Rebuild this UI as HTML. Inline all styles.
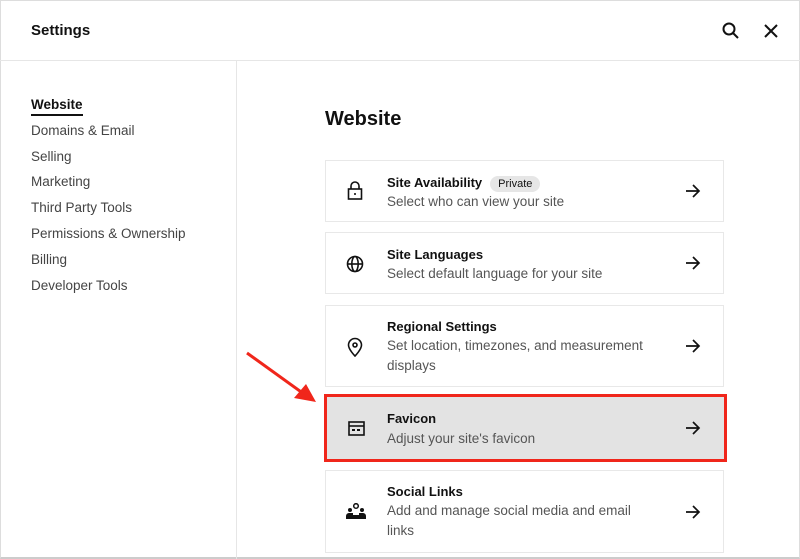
<!DOCTYPE html>
<html><head><style>
*{box-sizing:border-box;margin:0;padding:0}
body{width:800px;height:559px;overflow:hidden;background:#fff;font-family:"Liberation Sans",sans-serif;position:relative;color:#111}
.frame{position:absolute;left:0;top:0;width:800px;height:559px;border:1px solid #ddd;border-bottom:2px solid #ccc}
.hdr{position:absolute;left:0;top:0;width:800px;height:61px;border-bottom:1px solid #e6e6e6}
.hdr h1{position:absolute;left:31px;top:22px;font-size:15px;font-weight:bold}
.side{position:absolute;left:236px;top:61px;width:1px;height:498px;background:#e6e6e6}
.nav{position:absolute;left:31px;top:96px;font-size:13.5px;color:#444}
.nav div{height:25.8px;line-height:18px}
.nav .a{color:#111;font-weight:bold}
.nav .a span{border-bottom:2px solid #111;padding-bottom:2px}
h2{position:absolute;left:325px;top:108px;font-size:20px;font-weight:bold}
.card{position:absolute;left:325px;width:399px;border:1px solid #e8e8e8;background:#fff}
.card .t{position:absolute;left:61px;font-size:13px;font-weight:bold}
.card .d{position:absolute;left:61px;font-size:13.5px;color:#555;line-height:20px;width:265px}
.card svg.ic{position:absolute;left:20px}
.card .ar{position:absolute;right:22px;top:50%;margin-top:-8px}
.pill{display:inline-block;background:#e6e6e6;border-radius:9px;font-size:11px;font-weight:normal;padding:2px 8px;margin-left:8px}
.red{position:absolute;left:324px;top:394px;width:403px;height:68px;border:3px solid #f0261b}
</style></head><body>
<div class="frame"></div>
<div class="hdr"><h1>Settings</h1>
<svg style="position:absolute;left:722px;top:22px" width="17" height="17" viewBox="0 0 17 17" fill="none" stroke="#111" stroke-width="2"><circle cx="7" cy="7" r="5.5"/><path d="M11 11l5 5"/></svg>
<svg style="position:absolute;left:764px;top:24px" width="14" height="14" viewBox="0 0 14 14" stroke="#111" stroke-width="2"><path d="M1 1l12 12M13 1L1 13"/></svg>
</div>
<div class="side"></div>
<div class="nav">
<div class="a"><span>Website</span></div><div>Domains &amp; Email</div><div>Selling</div><div>Marketing</div><div>Third Party Tools</div><div>Permissions &amp; Ownership</div><div>Billing</div><div>Developer Tools</div>
</div>
<h2>Website</h2>

<div class="card" style="top:160px;height:62px">
<svg class="ic" style="top:20px;left:21px" width="16" height="19" viewBox="0 0 16 19" fill="none" stroke="#111" stroke-width="1.6"><rect x="1.5" y="8" width="13" height="10"/><path d="M4 8V5a4 4 0 0 1 8 0v3"/><path d="M8 12v2"/></svg>
<div class="t" style="top:14px">Site Availability<span class="pill">Private</span></div>
<div class="d" style="top:31px">Select who can view your site</div>
<svg class="ar" width="16" height="16" viewBox="0 0 16 16" fill="none" stroke="#111" stroke-width="1.7"><path d="M1 8h13M8 2l6 6-6 6"/></svg>
</div>

<div class="card" style="top:232px;height:62px">
<svg class="ic" style="top:22px" width="18" height="18" viewBox="0 0 18 18" fill="none" stroke="#111" stroke-width="1.6"><circle cx="9" cy="9" r="7.5"/><ellipse cx="9" cy="9" rx="3.2" ry="7.5"/><path d="M1.5 9h15"/></svg>
<div class="t" style="top:14px">Site Languages</div>
<div class="d" style="top:31px">Select default language for your site</div>
<svg class="ar" width="16" height="16" viewBox="0 0 16 16" fill="none" stroke="#111" stroke-width="1.7"><path d="M1 8h13M8 2l6 6-6 6"/></svg>
</div>

<div class="card" style="top:305px;height:82px">
<svg class="ic" style="top:31px;left:21px" width="16" height="20" viewBox="0 0 16 20" fill="none" stroke="#111" stroke-width="1.6"><path d="M8 19s6.5-6.5 6.5-11A6.5 6.5 0 0 0 1.5 8C1.5 12.5 8 19 8 19z"/><circle cx="8" cy="8" r="2"/></svg>
<div class="t" style="top:13px">Regional Settings</div>
<div class="d" style="top:30px">Set location, timezones, and measurement displays</div>
<svg class="ar" width="16" height="16" viewBox="0 0 16 16" fill="none" stroke="#111" stroke-width="1.7"><path d="M1 8h13M8 2l6 6-6 6"/></svg>
</div>

<div class="card" style="top:397px;height:62px;background:#e3e3e3;border-color:#e3e3e3">
<svg class="ic" style="top:23px;left:22px" width="17" height="15" viewBox="0 0 17 15" fill="none" stroke="#111" stroke-width="1.6"><rect x="1" y="1" width="15" height="13"/><path d="M1 5h15"/><rect x="4" y="8" width="3" height="2" fill="#111" stroke="none"/><rect x="9" y="8" width="3" height="2" fill="#111" stroke="none"/></svg>
<div class="t" style="top:13px">Favicon</div>
<div class="d" style="top:31px">Adjust your site's favicon</div>
<svg class="ar" width="16" height="16" viewBox="0 0 16 16" fill="none" stroke="#111" stroke-width="1.7"><path d="M1 8h13M8 2l6 6-6 6"/></svg>
</div>
<div class="red"></div>

<div class="card" style="top:470px;height:83px">
<svg class="ic" style="top:32px;left:20px" width="20" height="17" viewBox="0 0 20 17" fill="#111"><circle cx="10" cy="3" r="2.3" fill="none" stroke="#111" stroke-width="1.5"/><circle cx="4" cy="7" r="2"/><circle cx="16" cy="7" r="2"/><path d="M0 16v-3a3 3 0 0 1 3-3h14a3 3 0 0 1 3 3v3z"/><rect x="7" y="8" width="6" height="4" fill="#fff"/></svg>
<div class="t" style="top:13px">Social Links</div>
<div class="d" style="top:30px">Add and manage social media and email links</div>
<svg class="ar" width="16" height="16" viewBox="0 0 16 16" fill="none" stroke="#111" stroke-width="1.7"><path d="M1 8h13M8 2l6 6-6 6"/></svg>
</div>

<svg style="position:absolute;left:244px;top:350px" width="76" height="56" viewBox="0 0 76 56"><path d="M3 3L60 44" stroke="#f0261b" stroke-width="3"/><path d="M72 52L50 48L62 34z" fill="#f0261b"/></svg>
</body></html>
